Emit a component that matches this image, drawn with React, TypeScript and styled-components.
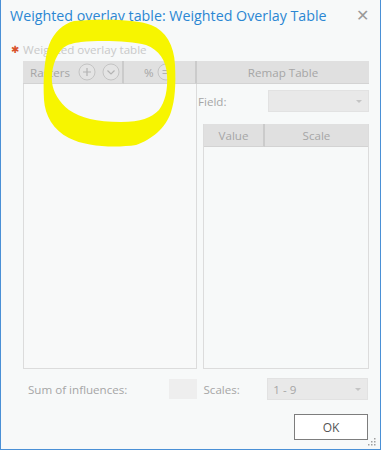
import styled, { createGlobalStyle } from "styled-components";

const GlobalStyle = createGlobalStyle`
  html, body {
    margin: 0;
    padding: 0;
    background: #ffffff;
  }
  body {
    font-family: "Open Sans", "Noto Sans", sans-serif;
  }
`;

const Dialog = styled.div`
  position: relative;
  width: 379px;
  height: 449px;
  background: #f7f9f9;
  border: 1px solid #4a90d6;
  border-top: none;
  display: flex;
  flex-direction: column;
  box-sizing: content-box;
`;

const TitleBar = styled.div`
  height: 30px;
  display: flex;
  align-items: center;
  justify-content: space-between;
  padding: 0 11px 0 9px;
`;

const Title = styled.h1`
  margin: 0;
  font-size: 14.25px;
  font-weight: 400;
  color: #2b87d3;
  white-space: nowrap;
`;

const Close = styled.span`
  font-size: 16px;
  color: #9a9a9a;
  line-height: 1;
`;

const Content = styled.div`
  flex: 1;
  display: flex;
  flex-direction: column;
  padding: 9px 12px 0 10px;
`;

const ParamLabel = styled.div`
  display: flex;
  align-items: center;
  gap: 3px;
  height: 20px;
  font-size: 11.6px;
  color: #c9c9c9;
`;

const Required = styled.span`
  color: #d9532c;
  font-size: 10px;
  width: 9px;
`;

const Grid = styled.div`
  margin: 2px 0 0 12px;
  display: grid;
  grid-template-columns: 174px 172px;
  grid-template-rows: 23px 285px;
`;

const HeaderCell = styled.div<{ $w?: string; $center?: boolean; $last?: boolean }>`
  background: #e0e0e0;
  border-bottom: 1px solid #d3d3d3;
  border-right: ${(p) => (p.$last ? "none" : "2px solid #cbcbcb")};
  width: ${(p) => p.$w || "auto"};
  flex: ${(p) => (p.$w ? "none" : 1)};
  display: flex;
  align-items: center;
  justify-content: ${(p) => (p.$center ? "center" : "flex-start")};
  font-size: 11.6px;
  color: #a6a6a6;
  box-sizing: border-box;
`;

const LeftHeader = styled.div`
  display: flex;
`;

const HeadText = styled.span<{ $pl: number; $gap: number }>`
  padding-left: ${(p) => p.$pl}px;
  margin-right: ${(p) => p.$gap}px;
`;

const Icons = styled.span`
  display: flex;
  gap: 6px;
  align-items: center;
`;

const RasterList = styled.div`
  border: 1px solid #dcdcdc;
  border-top: none;
  background: #f8f9f9;
`;

const RightPane = styled.div`
  display: flex;
  flex-direction: column;
  padding-left: 1px;
`;

const FieldRow = styled.div`
  display: flex;
  align-items: center;
  justify-content: space-between;
  height: 22px;
  margin-top: 6px;
  font-size: 11.6px;
  color: #a6a6a6;
`;

const Select = styled.div<{ $w: string }>`
  width: ${(p) => p.$w};
  height: 22px;
  background: #e9e9e9;
  border: 1px solid #e2e2e2;
  box-sizing: border-box;
  display: flex;
  align-items: center;
  justify-content: space-between;
  padding: 0 6px 0 5px;
  font-size: 11.6px;
  color: #a6a6a6;
`;

const Caret = styled.span`
  width: 0;
  height: 0;
  border-left: 3px solid transparent;
  border-right: 3px solid transparent;
  border-top: 3px solid #c4c4c4;
`;

const RemapTable = styled.div`
  margin: 12px 0 0 5px;
  flex: 1;
  display: flex;
  flex-direction: column;
  border: 1px solid #dcdcdc;
  border-top: none;
`;

const RemapHead = styled.div`
  display: flex;
  height: 23px;
`;

const Footer = styled.div`
  display: flex;
  align-items: center;
  height: 22px;
  margin: 9px 0 0 17px;
  font-size: 11.6px;
  color: #a6a6a6;
`;

const SumLabel = styled.span`
  width: 141px;
`;

const SumBox = styled.div`
  width: 29px;
  height: 20px;
  background: #eeeeee;
`;

const ScalesLabel = styled.span`
  margin-left: 6px;
  width: 64px;
`;

const Actions = styled.div`
  display: flex;
  justify-content: flex-end;
  margin-top: 14px;
`;

const OkButton = styled.button`
  width: 74px;
  height: 26px;
  background: #ffffff;
  border: 1px solid #7d7d7d;
  font-family: inherit;
  font-size: 12px;
  color: #555;
  padding: 0;
`;

const Grip = styled.svg`
  position: absolute;
  right: 4px;
  bottom: 3px;
`;

const Marker = styled.svg`
  position: absolute;
  left: 0;
  top: 0;
  pointer-events: none;
`;

function CircleIcon({ kind }: { kind: "plus" | "down" | "equals" }) {
  return (
    <svg width="18" height="18" viewBox="0 0 18 18">
      <circle cx="9" cy="9" r="8" fill="#e4e4e4" stroke="#c4c4c4" strokeWidth="1" />
      {kind === "plus" && (
        <path d="M9 5v8M5 9h8" stroke="#b3b3b3" strokeWidth="1.2" />
      )}
      {kind === "down" && (
        <path d="M5.5 7.5l3.5 3.5 3.5-3.5" fill="none" stroke="#b3b3b3" strokeWidth="1.2" />
      )}
      {kind === "equals" && (
        <path d="M5.5 7.5h7M5.5 10.5h7" stroke="#b3b3b3" strokeWidth="1.2" />
      )}
    </svg>
  );
}

function App() {
  return (
    <>
      <GlobalStyle />
      <Dialog>
        <TitleBar>
          <Title>Weighted overlay table: Weighted Overlay Table</Title>
          <Close>✕</Close>
        </TitleBar>
        <Content>
          <ParamLabel>
            <Required>✱</Required>
            Weighted overlay table
          </ParamLabel>
          <Grid>
            <LeftHeader>
              <HeaderCell $w="101px">
                <HeadText $pl={7} $gap={8}>
                  Rasters
                </HeadText>
                <Icons>
                  <CircleIcon kind="plus" />
                  <CircleIcon kind="down" />
                </Icons>
              </HeaderCell>
              <HeaderCell>
                <HeadText $pl={20} $gap={3}>
                  %
                </HeadText>
                <CircleIcon kind="equals" />
              </HeaderCell>
            </LeftHeader>
            <HeaderCell $center $last>
              Remap Table
            </HeaderCell>
            <RasterList />
            <RightPane>
              <FieldRow>
                <span>Field:</span>
                <Select $w="101px">
                  <span />
                  <Caret />
                </Select>
              </FieldRow>
              <RemapTable>
                <RemapHead>
                  <HeaderCell $w="61px" $center>
                    Value
                  </HeaderCell>
                  <HeaderCell $center $last>
                    Scale
                  </HeaderCell>
                </RemapHead>
              </RemapTable>
            </RightPane>
          </Grid>
          <Footer>
            <SumLabel>Sum of influences:</SumLabel>
            <SumBox />
            <ScalesLabel>Scales:</ScalesLabel>
            <Select $w="101px">
              <span>1 - 9</span>
              <Caret />
            </Select>
          </Footer>
          <Actions>
            <OkButton>OK</OkButton>
          </Actions>
        </Content>
        <Grip width="9" height="9" viewBox="0 0 9 9">
          {[
            [7, 1],
            [4, 4],
            [7, 4],
            [1, 7],
            [4, 7],
            [7, 7],
          ].map(([x, y]) => (
            <rect key={`${x}-${y}`} x={x} y={y} width="1.5" height="1.5" fill="#a0a0a0" />
          ))}
        </Grip>
        {/* yellow freehand highlight drawn over the dialog */}
        <Marker width="382" height="453" viewBox="0 0 382 453">
          <path
            fillRule="evenodd"
            fill="#f7f500"
            d="M73 21 C100 19 135 19 150 25 C165 31 173 45 174 65 C175 85 174 100 170 112 C165 128 150 140 135 145 C115 148 85 147 68 138 C52 130 44 115 43 100 C42 80 43 60 48 45 C53 32 62 24 73 21 Z M80 42 C100 40 130 41 145 45 C158 50 165 60 166 75 C167 90 164 102 158 110 C150 118 140 122 120 122 C95 122 80 118 68 110 C58 102 52 92 51 82 C50 70 54 56 62 48 C67 44 73 43 80 42 Z"
          />
        </Marker>
      </Dialog>
    </>
  );
}

export default App;
